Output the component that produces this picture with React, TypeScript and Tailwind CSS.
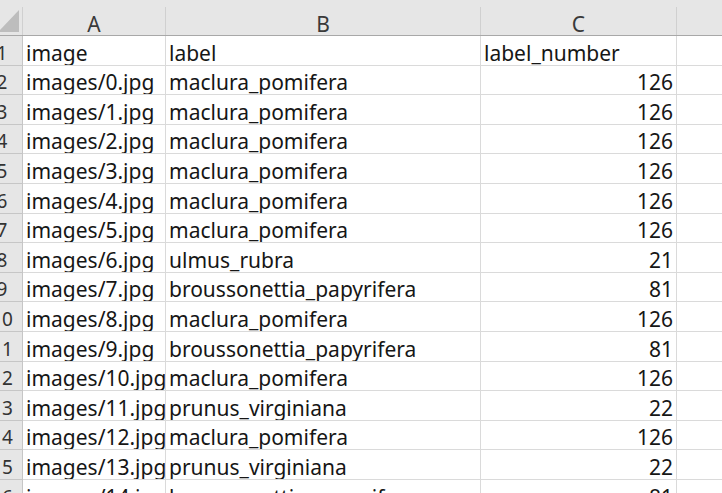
const rows: [string, string, string][] = [
  ["image", "label", "label_number"],
  ["images/0.jpg", "maclura_pomifera", "126"],
  ["images/1.jpg", "maclura_pomifera", "126"],
  ["images/2.jpg", "maclura_pomifera", "126"],
  ["images/3.jpg", "maclura_pomifera", "126"],
  ["images/4.jpg", "maclura_pomifera", "126"],
  ["images/5.jpg", "maclura_pomifera", "126"],
  ["images/6.jpg", "ulmus_rubra", "21"],
  ["images/7.jpg", "broussonettia_papyrifera", "81"],
  ["images/8.jpg", "maclura_pomifera", "126"],
  ["images/9.jpg", "broussonettia_papyrifera", "81"],
  ["images/10.jpg", "maclura_pomifera", "126"],
  ["images/11.jpg", "prunus_virginiana", "22"],
  ["images/12.jpg", "maclura_pomifera", "126"],
  ["images/13.jpg", "prunus_virginiana", "22"],
  ["images/14.jpg", "broussonettia_papyrifera", "81"],
];

const cell = "flex h-full items-end overflow-hidden whitespace-nowrap border-r border-[#dadada] pb-[1px] leading-[22px]";

export default function App() {
  return (
    <div className="h-[493px] w-[722px] overflow-hidden bg-white font-['Noto_Sans',sans-serif] text-[21px] text-[#161616]">
      <div className="-ml-[18px] flex flex-col">
        {/* column header strip */}
        <div className="h-[7px] bg-[#e6e6e6]" />
        <div className="flex h-[29px] border-b border-[#a8a8a8] bg-[#e6e6e6] text-[#3a3a3a]">
          <div className="relative w-[41px] shrink-0 border-r border-[#d0d0d0]">
            <svg className="absolute bottom-[3px] right-[3px]" width="21" height="22" viewBox="0 0 21 22">
              <polygon points="21,0 21,22 0,22" fill="#bdbdbd" />
            </svg>
          </div>
          <div className="flex w-[143px] shrink-0 items-end justify-center border-r border-[#d0d0d0] leading-[22px]">A</div>
          <div className="flex w-[315px] shrink-0 items-end justify-center border-r border-[#d0d0d0] leading-[22px]">B</div>
          <div className="flex w-[196px] shrink-0 items-end justify-center border-r border-[#d0d0d0] leading-[22px]">C</div>
          <div className="flex-1" />
        </div>

        {rows.map(([a, b, c], i) => (
          <div key={i} className="flex h-[29.6px] shrink-0 border-b border-[#dadada]">
            <div className="-mb-px flex h-[calc(100%+1px)] w-[41px] shrink-0 items-end justify-center border-r border-b border-[#c6c6c6] bg-[#e6e6e6] pb-[2px] text-[19px] leading-[19px] text-[#333]">
              {i + 1}
            </div>
            <div className={`${cell} w-[143px] shrink-0 pl-[3px]`}>{a}</div>
            <div className={`${cell} w-[315px] shrink-0 pl-[3px]`}>{b}</div>
            <div className={`${cell} w-[196px] shrink-0 pl-[3px] ${i === 0 ? "justify-start" : "justify-end pr-[3px]"}`}>{c}</div>
            <div className="flex-1" />
          </div>
        ))}
      </div>
    </div>
  );
}
